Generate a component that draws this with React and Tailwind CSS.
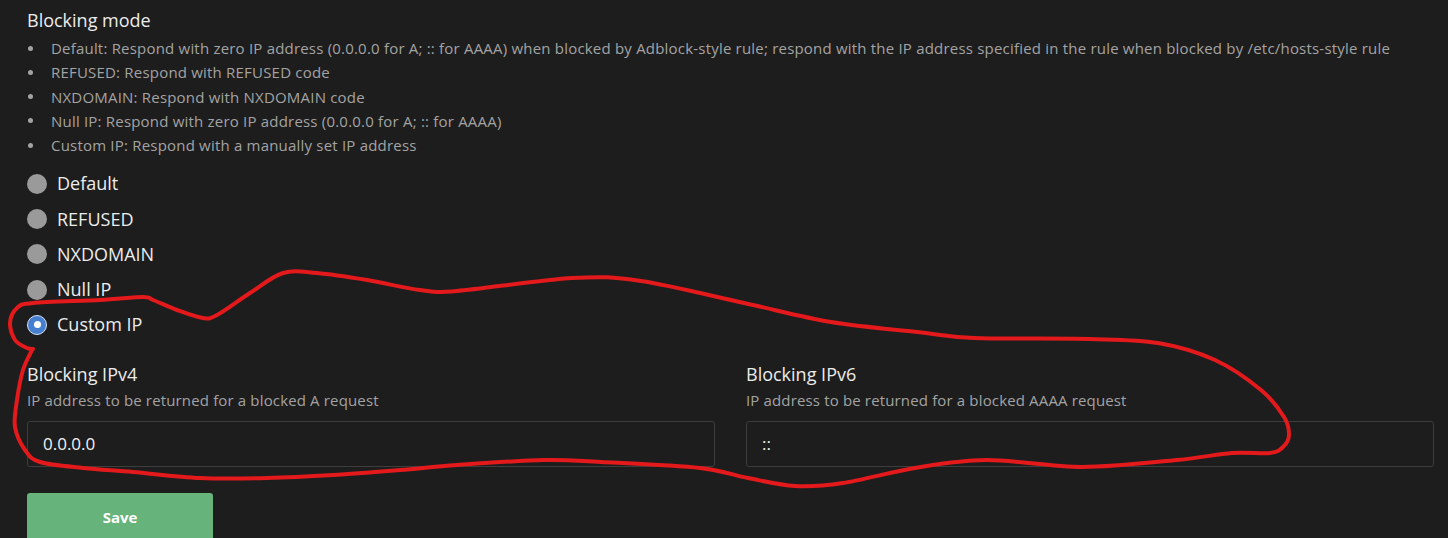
const modes = ["Default", "REFUSED", "NXDOMAIN", "Null IP", "Custom IP"];

const hints = [
  "Default: Respond with zero IP address (0.0.0.0 for A; :: for AAAA) when blocked by Adblock-style rule; respond with the IP address specified in the rule when blocked by /etc/hosts-style rule",
  "REFUSED: Respond with REFUSED code",
  "NXDOMAIN: Respond with NXDOMAIN code",
  "Null IP: Respond with zero IP address (0.0.0.0 for A; :: for AAAA)",
  "Custom IP: Respond with a manually set IP address",
];

// hand-drawn marker loop from the screenshot
const scribble = [
  [33, 349], [27, 348], [15, 340], [10, 323], [17, 308], [33, 303], [100, 300], [143, 297],
  [153, 300], [177, 310], [203, 318], [217, 315], [250, 293], [283, 273], [317, 273],
  [367, 280], [420, 290], [457, 291], [572, 278], [641, 281], [744, 303], [831, 322],
  [917, 332], [974, 338], [1089, 339], [1158, 343], [1215, 360], [1261, 390], [1284, 417],
  [1289, 435], [1283, 447], [1270, 453], [1232, 453], [1177, 460], [1082, 467], [986, 460],
  [915, 468], [843, 483], [795, 486], [748, 478], [700, 468], [601, 462], [544, 460],
  [457, 465], [400, 470], [333, 475], [267, 478], [200, 478], [133, 472], [83, 468],
  [40, 462], [25, 450], [15, 427], [17, 400], [23, 370], [32, 350],
];

function smoothPath(pts) {
  let d = `M${pts[0][0]},${pts[0][1]}`;
  for (let i = 0; i < pts.length - 1; i++) {
    const p0 = pts[i - 1] || pts[i];
    const p1 = pts[i];
    const p2 = pts[i + 1];
    const p3 = pts[i + 2] || p2;
    const c1 = [p1[0] + (p2[0] - p0[0]) / 6, p1[1] + (p2[1] - p0[1]) / 6];
    const c2 = [p2[0] - (p3[0] - p1[0]) / 6, p2[1] - (p3[1] - p1[1]) / 6];
    d += ` C${c1[0]},${c1[1]} ${c2[0]},${c2[1]} ${p2[0]},${p2[1]}`;
  }
  return d;
}

function Radio({ label, checked }) {
  return (
    <div className="flex items-center gap-[10px] h-[35.25px]">
      {checked ? (
        <span className="w-5 h-5 rounded-full bg-[#467fcf] border border-[#d8e2f2] flex items-center justify-center">
          <span className="w-[7px] h-[7px] rounded-full bg-white" />
        </span>
      ) : (
        <span className="w-5 h-5 rounded-full bg-[#9a9a9a]" />
      )}
      <span className="text-[18px] text-[#ececec]">{label}</span>
    </div>
  );
}

function IpField({ title, hint, value }) {
  return (
    <div className="flex flex-col">
      <div className="text-[18px] text-[#ececec] leading-[24px]">{title}</div>
      <div className="text-[15px] tracking-[0.15px] text-[#a3a3a3] leading-[20px] mt-[4px]">{hint}</div>
      <div className="mt-[11px] h-[46px] border border-[#3d3d3d] rounded-[3px] flex items-center px-[15px] text-[17px] text-[#f2f2f2]">
        {value}
      </div>
    </div>
  );
}

export default function App() {
  return (
    <div className="relative w-[1448px] h-[538px] overflow-hidden bg-[#1d1d1d] font-['Open_Sans','Noto_Sans',sans-serif]">
      <div className="pl-[27px] pr-[14px] pt-[8px]">
        <div className="text-[18px] text-[#ececec] leading-[24px]">Blocking mode</div>
        <ul className="mt-[4px] text-[15px] tracking-[0.2px] text-[#a3a3a3] leading-[24.25px]">
          {hints.map((h) => (
            <li key={h} className="flex items-center">
              <span className="ml-[1px] mr-[18px] w-[5px] h-[5px] rounded-full bg-[#a3a3a3] shrink-0" />
              {h}
            </li>
          ))}
        </ul>
        <div className="mt-[9px] flex flex-col">
          {modes.map((m) => (
            <Radio key={m} label={m} checked={m === "Custom IP"} />
          ))}
        </div>
        <div className="mt-[19px] grid grid-cols-2 gap-[31px]">
          <IpField title="Blocking IPv4" hint="IP address to be returned for a blocked A request" value="0.0.0.0" />
          <IpField title="Blocking IPv6" hint="IP address to be returned for a blocked AAAA request" value="::" />
        </div>
        <button className="mt-[26px] w-[186px] h-[50px] rounded-[3px] bg-[#66b37b] text-white text-[15px] font-bold">
          Save
        </button>
      </div>
      <svg className="absolute inset-0 pointer-events-none" width="1448" height="538">
        <path d={smoothPath(scribble)} fill="none" stroke="#e3191c" strokeWidth="4" strokeLinecap="round" strokeLinejoin="round" />
      </svg>
    </div>
  );
}
